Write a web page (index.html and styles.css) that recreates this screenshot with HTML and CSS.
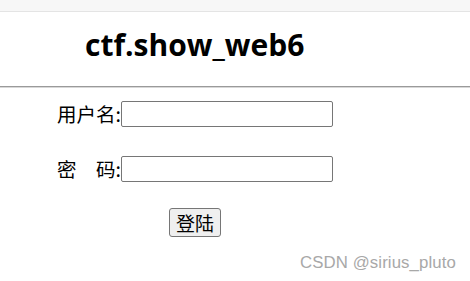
FILE: index.html
```html
<!DOCTYPE html>
<html lang="zh">
<head>
<meta charset="utf-8">
<link rel="stylesheet" href="styles.css">
</head>
<body>
<div class="topbar"></div>
<div class="title-area">
  <h1 class="title">ctf.show_web6</h1>
</div>
<div class="rule"></div>
<form class="login">
  <div class="row"><span class="label">用户名:</span><input class="field" type="text"></div>
  <div class="row row2"><span class="label">密　码:</span><input class="field" type="password"></div>
  <div class="btn-row"><button class="btn" type="button">登陆</button></div>
</form>
<div class="watermark">CSDN @sirius_pluto</div>
</body>
</html>
```
FILE: styles.css
```css
html, body {
  margin: 0;
  padding: 0;
  background: #ffffff;
  width: 470px;
  height: 281px;
  overflow: hidden;
  position: relative;
  font-family: "Liberation Sans", "Noto Sans CJK SC", sans-serif;
}
.topbar {
  height: 11px;
  background: #f7f7f7;
  border-bottom: 1px solid #e4e4e4;
}
.title-area {
  height: 64px;
  padding-bottom: 10px;
  display: flex;
  align-items: center;
  padding-left: 85px;
}
.title {
  margin: 0;
  font-family: "Open Sans", "Noto Sans", sans-serif;
  font-weight: 700;
  font-size: 30px;
  color: #000;
  letter-spacing: 0;
}
.rule {
  height: 1px;
  background: #9a9a9a;
  border-bottom: 1px solid #d8d8d8;
}
.login {
  padding-left: 57px;
  padding-top: 13px;
  font-family: "Noto Sans CJK SC", sans-serif;
  font-size: 19.5px;
  color: #000;
}
.row {
  display: flex;
  align-items: center;
  height: 26px;
}
.row2 {
  margin-top: 29px;
}
.label {
  line-height: 26px;
}
.field {
  width: 212px;
  height: 26px;
  box-sizing: border-box;
  border: 1px solid #767676;
  border-radius: 2px;
  padding: 1px 2px;
  margin: 0;
  background: #fff;
}
.btn-row {
  padding-left: 112px;
  margin-top: 26px;
}
.btn {
  width: 52px;
  height: 29px;
  box-sizing: border-box;
  border: 1px solid #767676;
  border-radius: 3px;
  background: #efefef;
  font-family: "Noto Sans CJK SC", sans-serif;
  font-size: 19px;
  line-height: 1;
  padding: 0;
  color: #000;
}
.watermark {
  position: absolute;
  left: 300px;
  top: 253px;
  font-family: "Liberation Sans", sans-serif;
  font-size: 16.8px;
  color: #a8a8a8;
  letter-spacing: 0.1px;
}
```
